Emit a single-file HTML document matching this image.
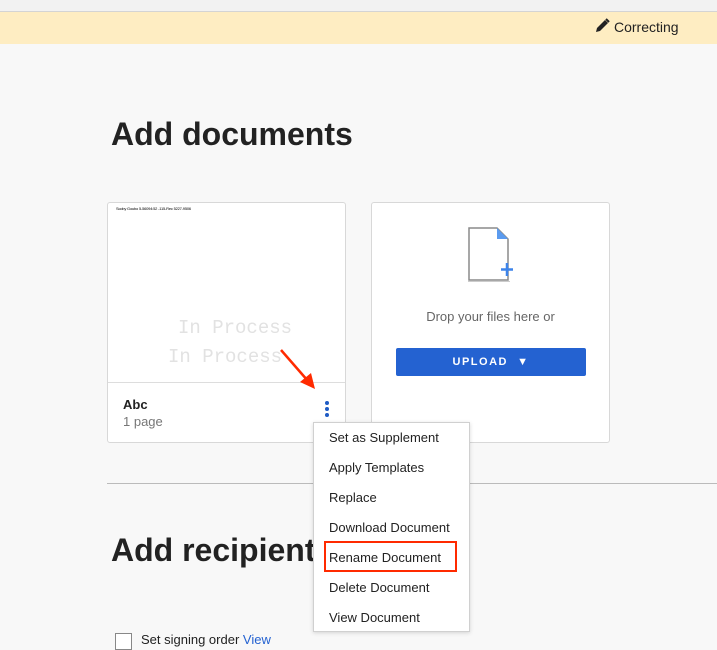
<!DOCTYPE html><html><head><style>
body{margin:0;width:717px;height:639px;overflow:hidden;background:#f8f8f8;font-family:"Liberation Sans",sans-serif;position:relative}
.a{position:absolute}
.card{background:#fff;border:1px solid #d8d8d8;border-radius:3px;box-sizing:border-box}
.mi{position:absolute;left:15px;font-size:13px;color:#222}
</style></head><body>
<div class="a" style="left:0;top:0;width:717px;height:11px;background:#f2f2f2;border-bottom:1px solid #d4d4d4"></div>
<div class="a" style="left:0;top:12px;width:717px;height:32px;background:#feedc2"></div>
<svg class="a" style="left:595px;top:18px" width="15" height="15" viewBox="0 0 15 15"><path d="M1 14 L2 10 L10 2 L13 5 L5 13 Z" fill="#222"/><path d="M11 1 L14 4" stroke="#222" stroke-width="2"/></svg>
<div class="a" style="left:614px;top:19px;font-size:14px;color:#222">Correcting</div>
<div class="a" style="left:111px;top:116px;font-size:32px;font-weight:bold;color:#222">Add documents</div>
<div class="a card" style="left:107px;top:202px;width:239px;height:241px">
<div class="a" style="left:8px;top:3px;font-size:4px;color:#000;white-space:nowrap;letter-spacing:-.2px">Scoby Goubo 5-56094:52 -115-Rec 5227-9506</div>
<div class="a" style="left:70px;top:114px;font-family:'Liberation Mono',monospace;font-size:19px;color:#e2e2e2">In Process</div>
<div class="a" style="left:60px;top:143px;font-family:'Liberation Mono',monospace;font-size:19px;color:#e2e2e2">In Process</div>
<div class="a" style="left:0;top:179px;width:237px;border-top:1px solid #ddd"></div>
<div class="a" style="left:15px;top:194px;font-size:13px;font-weight:bold;color:#222">Abc</div>
<div class="a" style="left:15px;top:211px;font-size:13px;color:#777">1 page</div>
<div class="a" style="left:217px;top:198px;width:4px"><div style="width:4px;height:4px;border-radius:2px;background:#1f5bc4;margin-bottom:2px"></div><div style="width:4px;height:4px;border-radius:2px;background:#1f5bc4;margin-bottom:2px"></div><div style="width:4px;height:4px;border-radius:2px;background:#1f5bc4"></div></div>
</div>
<svg class="a" style="left:278px;top:347px" width="40" height="45"><line x1="3" y1="3" x2="30" y2="34" stroke="#ff2a00" stroke-width="2.5"/><path d="M37 42 L22 35 L33 26 Z" fill="#ff2a00"/></svg>
<div class="a card" style="left:371px;top:202px;width:239px;height:241px">
<svg class="a" style="left:96px;top:24px" width="48" height="56" viewBox="0 0 48 56"><path d="M1 1 H29 L40 12 V53 H1 Z" fill="#fff" stroke="#8a8a8a" stroke-width="1.5"/><path d="M29 1 L40 12 H29 Z" fill="#5b9bef"/><path d="M39 36 V49 M33 42.5 H45" stroke="#3d84ea" stroke-width="2.5"/><line x1="0" y1="54.5" x2="42" y2="54.5" stroke="#ccc"/></svg>
<div class="a" style="left:0;width:237px;top:106px;text-align:center;font-size:13px;color:#666">Drop your files here or</div>
<div class="a" style="left:24px;top:145px;width:190px;height:28px;background:#2462d1;border-radius:2px;color:#fff;font-size:11px;font-weight:bold;letter-spacing:1.5px;text-align:center;line-height:28px">UPLOAD &nbsp;▼</div>
</div>
<div class="a" style="left:107px;top:483px;width:610px;border-top:1px solid #bbb"></div>
<div class="a" style="left:111px;top:532px;font-size:32px;font-weight:bold;color:#222">Add recipients</div>
<div class="a" style="left:115px;top:633px;width:15px;height:15px;border:1px solid #888;background:#fff"></div>
<div class="a" style="left:141px;top:632px;font-size:13px;color:#222">Set signing order <span style="color:#2462d1">View</span></div>
<div class="a" style="left:313px;top:422px;width:157px;height:210px;background:#fff;border:1px solid #d0d0d0;box-shadow:0 1px 4px rgba(0,0,0,.15);box-sizing:border-box">
<div class="mi" style="top:7px">Set as Supplement</div>
<div class="mi" style="top:37px">Apply Templates</div>
<div class="mi" style="top:67px">Replace</div>
<div class="mi" style="top:97px">Download Document</div>
<div class="mi" style="top:127px">Rename Document</div>
<div class="mi" style="top:157px">Delete Document</div>
<div class="mi" style="top:187px">View Document</div>
<div class="a" style="left:10px;top:118px;width:133px;height:31px;border:2px solid #ff2a00;box-sizing:border-box"></div>
</div>
</body></html>
